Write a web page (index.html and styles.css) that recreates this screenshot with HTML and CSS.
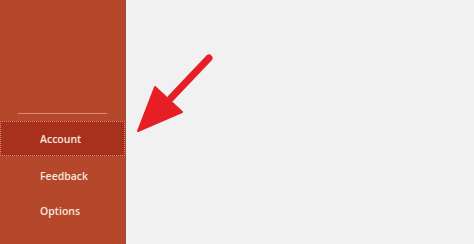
FILE: index.html
```html
<!DOCTYPE html>
<html lang="en">

<head>
    <meta charset="UTF-8">
    <title>Account</title>
    <link rel="stylesheet" href="styles.css">
</head>

<body>

    <div class="app">
        <!-- Backstage side menu -->
        <nav class="sidebar">
            <div class="divider"></div>
            <ul class="menu">
                <li class="menu-item active">Account</li>
                <li class="menu-item">Feedback</li>
                <li class="menu-item">Options</li>
            </ul>
        </nav>

        <main class="content">
            <!-- Pointer arrow -->
            <svg class="arrow" width="90" height="90" viewBox="0 0 90 90">
                <line x1="74" y1="5" x2="36" y2="45" stroke="#e61e25" stroke-width="7" stroke-linecap="round" />
                <polygon points="3,78 20,34 47,59" fill="#e61e25" stroke="#e61e25" stroke-width="2" stroke-linejoin="round" />
            </svg>
        </main>
    </div>

</body>

</html>
```

FILE: styles.css
```css
body {
    margin: 0;
    font-family: 'Open Sans', 'Noto Sans', sans-serif;
    background-color: #f1f1f1;
}

.app {
    display: flex;
    height: 244px;
}

.sidebar {
    width: 126px;
    background-color: #b5472b;
    border-right: 1px solid #9c4a3c;
    padding-top: 113px;
    box-sizing: border-box;
}

.divider {
    height: 1px;
    margin: 0 18px 7px 18px;
    background-color: #d98a72;
}

.menu {
    list-style-type: none;
    margin: 0;
    padding: 0;
}

.menu-item {
    height: 35px;
    line-height: 36px;
    padding-left: 40px;
    font-size: 10.5px;
    font-weight: 600;
    color: #f6e6df;
}

.menu-item.active {
    background-color: #a8311d;
    outline: 1px dotted #d58a77;
    outline-offset: -1px;
    margin-bottom: 2px;
}

.content {
    flex: 1;
    position: relative;
}

/* arrow lies over the page */
.arrow {
    position: absolute;
    left: 9px;
    top: 53px;
}
```
